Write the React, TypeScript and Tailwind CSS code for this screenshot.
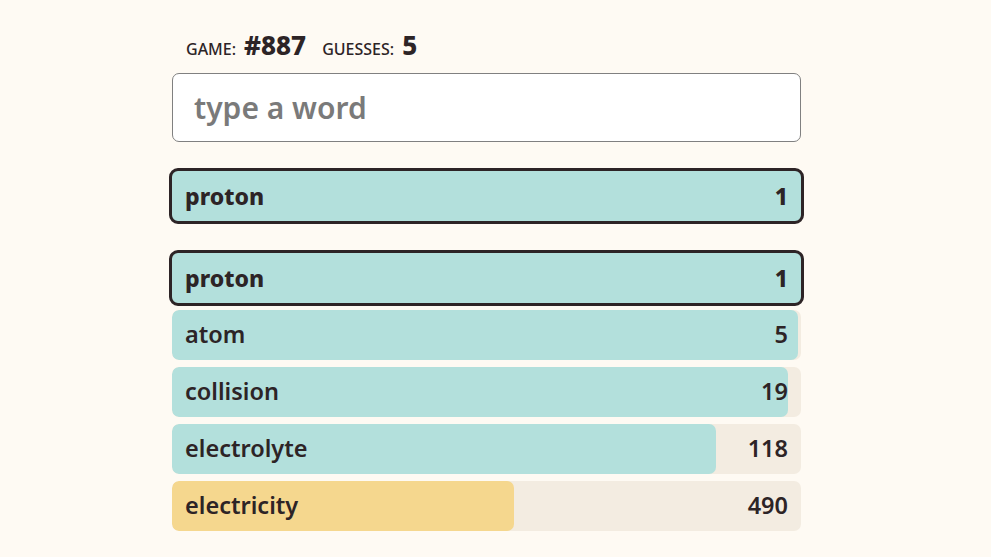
const GUESSES = [
  { word: 'proton', rank: 1, pct: 100, color: 'bg-[#b3e0dc]' },
  { word: 'atom', rank: 5, pct: 99.6, color: 'bg-[#b3e0dc]' },
  { word: 'collision', rank: 19, pct: 97.9, color: 'bg-[#b3e0dc]' },
  { word: 'electrolyte', rank: 118, pct: 86.5, color: 'bg-[#b3e0dc]' },
  { word: 'electricity', rank: 490, pct: 54.4, color: 'bg-[#f5d78e]' },
];

function HighlightRow({ word, rank }: { word: string; rank: number }) {
  return (
    <div className="-mx-[3px] flex h-[56px] items-center justify-between rounded-[9px] border-[3px] border-[#2d2426] bg-[#b3e0dc] px-[13px] text-[23px] font-extrabold text-[#2d2426]">
      <span>{word}</span>
      <span>{rank}</span>
    </div>
  );
}

function GuessRow({ word, rank, pct, color }: (typeof GUESSES)[number]) {
  return (
    <div className="relative flex h-[50px] items-center justify-between overflow-hidden rounded-[7px] bg-[#f3ece1] px-[13px] text-[23.5px] font-semibold text-[#2d2426]">
      <div className={`absolute inset-y-0 left-0 rounded-[7px] ${color}`} style={{ width: `${pct}%` }} />
      <span className="relative">{word}</span>
      <span className="relative">{rank}</span>
    </div>
  );
}

export default function App() {
  return (
    <div
      className="min-h-[557px] bg-[#fefaf3] pl-[172px] pt-[32px] text-[#2d2426]"
      style={{ fontFamily: '"Noto Sans", "Open Sans", sans-serif' }}
    >
      <div className="w-[629px]">
        <div className="flex items-baseline pl-[14px] leading-none">
          <span className="text-[16px] font-medium uppercase">Game:</span>
          <span className="ml-[8px] text-[26px] font-extrabold">#887</span>
          <span className="ml-[16px] text-[16px] font-medium uppercase">Guesses:</span>
          <span className="ml-[8px] text-[26px] font-extrabold">5</span>
        </div>

        <input
          type="text"
          placeholder="type a word"
          className="mt-[15px] block h-[69px] w-full rounded-[7px] border border-[#808080] bg-white px-[21px] text-[30px] font-semibold text-[#2d2426] outline-none placeholder:text-[#7a7a7a]"
        />

        <div className="mt-[26px]">
          <HighlightRow word="proton" rank={1} />
        </div>

        <div className="mt-[26px] flex flex-col gap-[7px]">
          <div className="mb-[-3px]">
            <HighlightRow word="proton" rank={1} />
          </div>
          {GUESSES.slice(1).map((g) => (
            <GuessRow key={g.word} {...g} />
          ))}
        </div>
      </div>
    </div>
  );
}
